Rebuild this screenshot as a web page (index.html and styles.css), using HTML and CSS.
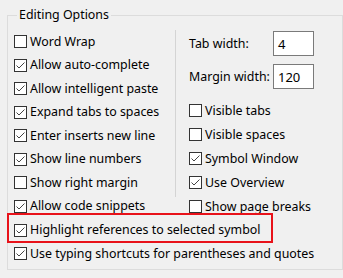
FILE: index.html
```html
<!DOCTYPE html>
<html lang="en">
<head>
    <meta charset="UTF-8">
    <title>Editing Options</title>
    <link rel="stylesheet" href="styles.css">
</head>
<body>
    <fieldset class="group">
        <legend>Editing Options</legend>

        <div class="cols">
            <div class="col-left">
                <label class="opt"><span class="box"></span>Word Wrap</label>
                <label class="opt"><span class="box"><svg viewBox="0 0 11 11"><polyline points="1.5,5.5 4,8 9.5,2.5"/></svg></span>Allow auto-complete</label>
                <label class="opt"><span class="box"><svg viewBox="0 0 11 11"><polyline points="1.5,5.5 4,8 9.5,2.5"/></svg></span>Allow intelligent paste</label>
                <label class="opt"><span class="box"><svg viewBox="0 0 11 11"><polyline points="1.5,5.5 4,8 9.5,2.5"/></svg></span>Expand tabs to spaces</label>
                <label class="opt"><span class="box"><svg viewBox="0 0 11 11"><polyline points="1.5,5.5 4,8 9.5,2.5"/></svg></span>Enter inserts new line</label>
                <label class="opt"><span class="box"><svg viewBox="0 0 11 11"><polyline points="1.5,5.5 4,8 9.5,2.5"/></svg></span>Show line numbers</label>
                <label class="opt"><span class="box"></span>Show right margin</label>
                <label class="opt"><span class="box"><svg viewBox="0 0 11 11"><polyline points="1.5,5.5 4,8 9.5,2.5"/></svg></span>Allow code snippets</label>
            </div>

            <div class="sep"></div>

            <div class="col-right">
                <div class="field">
                    <span class="field-label">Tab width:</span>
                    <span class="num">4</span>
                </div>
                <div class="field">
                    <span class="field-label">Margin width:</span>
                    <span class="num">120</span>
                </div>
                <div class="checks">
                    <label class="opt"><span class="box"></span>Visible tabs</label>
                    <label class="opt"><span class="box"></span>Visible spaces</label>
                    <label class="opt"><span class="box"><svg viewBox="0 0 11 11"><polyline points="1.5,5.5 4,8 9.5,2.5"/></svg></span>Symbol Window</label>
                    <label class="opt"><span class="box"><svg viewBox="0 0 11 11"><polyline points="1.5,5.5 4,8 9.5,2.5"/></svg></span>Use Overview</label>
                    <label class="opt"><span class="box"></span>Show page breaks</label>
                </div>
            </div>
        </div>

        <label class="opt marked"><span class="box"><svg viewBox="0 0 11 11"><polyline points="1.5,5.5 4,8 9.5,2.5"/></svg></span>Highlight references to selected symbol</label>
        <label class="opt"><span class="box"><svg viewBox="0 0 11 11"><polyline points="1.5,5.5 4,8 9.5,2.5"/></svg></span>Use typing shortcuts for parentheses and quotes</label>
    </fieldset>
</body>
</html>
```

FILE: styles.css
```css
html, body {
    margin: 0;
    padding: 0;
    background: #f0f0f0;
}

body {
    font-family: "Noto Sans", "Liberation Sans", sans-serif;
    font-size: 12.4px;
    color: #000;
    padding-top: 7px;
}

.group {
    margin: 0 0 0 7px;
    width: 336px;
    height: 263px;
    box-sizing: border-box;
    border: 1px solid #dcdcdc;
    padding: 0 0 0 6px;
}

.group legend {
    margin-left: 3px;
    padding: 0 2px;
    line-height: 16px;
}

.cols {
    display: flex;
    align-items: flex-start;
    margin-top: 7px;
}

.col-left {
    width: 161px;
    display: flex;
    flex-direction: column;
}

.sep {
    width: 1px;
    height: 167px;
    background: #d4d4d4;
}

.col-right {
    padding-left: 13px;
    padding-top: 1px;
}

.opt {
    display: flex;
    align-items: center;
    height: 23.5px;
    line-height: 16px;
    white-space: nowrap;
}

.box {
    width: 13px;
    height: 13px;
    box-sizing: border-box;
    border: 1px solid #333;
    background: #fff;
    margin-right: 3px;
    flex-shrink: 0;
    display: flex;
}

.box svg {
    width: 11px;
    height: 11px;
    fill: none;
    stroke: #444;
    stroke-width: 1;
}

.field {
    display: flex;
    align-items: center;
    height: 25px;
    margin-bottom: 8px;
}

.field-label {
    width: 84px;
}

.num {
    width: 41px;
    height: 25px;
    box-sizing: border-box;
    border: 1px solid #7a7a7a;
    background: #fff;
    padding: 4px 0 0 4px;
    line-height: 16px;
    font-size: 13px;
}

.checks {
    padding-top: 1.5px;
}

.checks .opt {
    height: 24px;
}

.marked {
    position: relative;
}

.marked::after {
    content: "";
    position: absolute;
    left: -7px;
    top: -6px;
    width: 266px;
    height: 30px;
    box-sizing: border-box;
    border: 2px solid #e8121a;
}
```
